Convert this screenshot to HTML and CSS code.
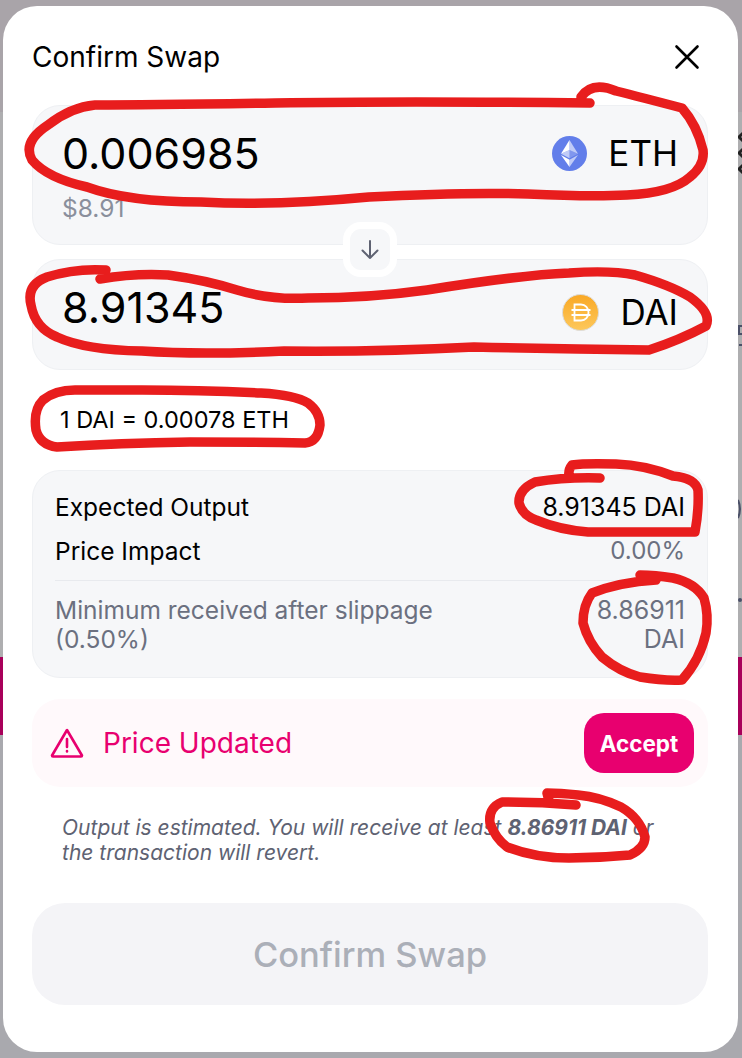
FILE: index.html
```html
<!DOCTYPE html>
<html lang="en">
<head>
    <meta charset="UTF-8" />
    <title>Confirm Swap</title>
    <link rel="stylesheet" href="styles.css">
</head>
<body>
    <!-- Bits of the page behind the modal -->
    <svg class="backdrop-bits" viewBox="0 0 742 1058" width="742" height="1058">
        <path d="M746 130l-7 7 7 7M746 146l-7 7 7 7M746 162l-7 7 7 7" fill="none" stroke="#222" stroke-width="3"/>
        <path d="M743 326h-4v8h3M739 345h3" fill="none" stroke="#4b5068" stroke-width="2"/>
        <path d="M738 500q4 9 0 18" fill="none" stroke="#4b5068" stroke-width="2"/>
        <circle cx="740" cy="600" r="2" fill="#4b5068"/>
    </svg>

    <div class="modal">
        <div class="modal-header">
            <h2>Confirm Swap</h2>
            <svg class="close-icon" viewBox="0 0 26 26" width="26" height="26">
                <path d="M2.500 2.500l21 21M23.500 2.500l-21 21" fill="none" stroke="#000" stroke-width="2.600" stroke-linecap="round"/>
            </svg>
        </div>

        <div class="swap-cards">
            <div class="card token-card from-card">
                <div class="token-row">
                    <span class="amount">0.006985</span>
                    <div class="token">
                        <svg class="token-icon" viewBox="0 0 35 35" width="35" height="35">
                            <circle cx="17.500" cy="17.500" r="17.500" fill="#627eea"/>
                            <path d="M17.500 4v10l8.500 3.800z" fill="#fff" fill-opacity=".6"/>
                            <path d="M17.500 4L9 17.800l8.500-3.800z" fill="#fff"/>
                            <path d="M17.500 23.800V31l8.500-12z" fill="#fff" fill-opacity=".6"/>
                            <path d="M17.500 31v-7.200L9 19z" fill="#fff"/>
                            <path d="M17.500 22.200l8.500-4.400-8.500-3.800z" fill="#fff" fill-opacity=".2"/>
                            <path d="M9 17.800l8.500 4.400V14z" fill="#fff" fill-opacity=".6"/>
                        </svg>
                        <span>ETH</span>
                    </div>
                </div>
                <div class="fiat">$8.91</div>
            </div>
            <div class="arrow-box">
                <svg viewBox="0 0 24 24" width="24" height="24">
                    <path d="M12 3v17M4.500 12.500L12 20l7.500-7.500" fill="none" stroke="#5e6272" stroke-width="2" stroke-linecap="round" stroke-linejoin="round"/>
                </svg>
            </div>
            <div class="card token-card to-card">
                <div class="token-row">
                    <span class="amount">8.91345</span>
                    <div class="token token-lower">
                        <svg class="token-icon" viewBox="0 0 37 37" width="37" height="37">
                            <defs>
                                <linearGradient id="dai-fill" x1="0" y1="0" x2="0" y2="1">
                                    <stop offset="0" stop-color="#f9a824"/>
                                    <stop offset="1" stop-color="#fdc85c"/>
                                </linearGradient>
                            </defs>
                            <circle cx="18.500" cy="18.500" r="18" fill="url(#dai-fill)" stroke="#dcdcdc"/>
                            <path d="M12.500 10.500h6.500c4.500 0 7.500 3.500 7.500 8s-3 8-7.500 8h-6.500zM9.500 16h19M9.500 21h19" fill="none" stroke="#fff" stroke-width="1.800"/>
                        </svg>
                        <span>DAI</span>
                    </div>
                </div>
            </div>
        </div>

        <div class="rate">1 DAI = 0.00078 ETH</div>

        <div class="card info-card">
            <div class="info-row">
                <span>Expected Output</span>
                <span class="info-value">8.91345 DAI</span>
            </div>
            <div class="info-row">
                <span>Price Impact</span>
                <span class="info-impact muted">0.00%</span>
            </div>
            <div class="info-divider"></div>
            <div class="info-row info-row-min muted">
                <span>Minimum received after slippage (0.50%)</span>
                <span class="info-value min-value">8.86911 DAI</span>
            </div>
        </div>

        <div class="price-warning">
            <div class="price-warning-label">
                <svg viewBox="0 0 34 30" width="34" height="30">
                    <path d="M17 2L2 27.500a1 1 0 0 0 1 1h28a1 1 0 0 0 1-1z" fill="none" stroke="#e8006f" stroke-width="2.600" stroke-linejoin="round"/>
                    <path d="M17 11v8M17 23v.500" fill="none" stroke="#e8006f" stroke-width="2.600" stroke-linecap="round"/>
                </svg>
                <span>Price Updated</span>
            </div>
            <button class="accept-btn">Accept</button>
        </div>

        <p class="note">Output is estimated. You will receive at least <b>8.86911 DAI</b> or the transaction will revert.</p>

        <button class="confirm-btn" disabled>Confirm Swap</button>
    </div>

    <!-- Red marker scribbled on the screenshot -->
    <svg class="scribbles" viewBox="0 0 742 1058" width="742" height="1058">
        <g fill="none" stroke="#e81d1d" stroke-width="9.500" stroke-linecap="round" stroke-linejoin="round">
            <path d="M590 103Q400 101 275 103Q150 105 95 105Q71 107 48 125Q22 142 32 160Q47 178 87 187Q128 202 201 202Q275 206 369 197Q464 192 528 194Q592 197 627 195Q672 193 690 177Q705 165 703 150Q697 125 682 108Q640 97 616 91Q592 81 581 97"/>
            <path d="M100 279Q135 273 168 275Q205 280 237 290Q270 300 308 298Q370 298 427 290Q520 275 569 273Q610 270 635 275Q670 285 690 297Q712 313 706 326Q680 340 649 350Q560 349 474 347Q380 352 284 351Q200 355 142 351Q85 350 57 337Q35 328 31 305Q26 285 47 277Q75 268 106 270"/>
            <path d="M57 447Q40 445 36 430Q33 410 43 400Q55 390 75 390Q105 390 142 390Q200 390 261 393Q295 395 308 403Q320 412 320 425Q318 442 305 443Q250 442 190 442Q120 443 57 447"/>
            <path d="M600 478Q565 477 535 482Q518 490 519 503Q522 515 536 520Q560 530 588 532Q640 532 695 532Q699 510 698 490Q695 478 673 476Q645 465 616 464Q585 463 572 465Q568 470 569 476"/>
            <path d="M656 580Q620 582 592 593Q583 605 583 623Q588 642 602 657Q620 672 640 677Q665 681 682 680Q700 660 706 633Q709 615 704 598Q695 583 673 578Q655 575 640 575"/>
            <path d="M576 805Q540 802 502 802Q488 808 490 823Q495 838 507 847Q535 858 569 858Q600 858 630 855Q645 848 645 837Q640 818 621 807Q600 797 578 795Q560 793 547 793Q548 798 550 803"/>
        </g>
    </svg>
</body>
</html>
```

FILE: styles.css
```css
:root {
    --card-color: #f6f7f9;
    --border-color: #eef0f3;
    --text-color: #000;
    --muted-color: #6b7080;
    --pink-color: #e8006f;
}

* {
    margin: 0;
    padding: 0;
    box-sizing: border-box;
}

body {
    position: relative;
    width: 742px;
    height: 1058px;
    overflow: hidden;
    font-family: Inter, "Noto Sans", sans-serif;
    color: var(--text-color);
    padding: 6px 3px;
    background: linear-gradient(180deg,
        #a9a4a9 0, #a9a4a9 112px,
        #aeaeb0 112px, #aeaeb0 657px,
        #a8005a 657px, #a8005a 735px,
        #a9a9ae 735px, #a9a9ae 100%);
}

.backdrop-bits, .scribbles {
    position: absolute;
    top: 0;
    left: 0;
    pointer-events: none;
}

.modal {
    position: relative;
    display: flex;
    flex-direction: column;
    width: 735px;
    height: 1046px;
    padding: 0 30px 0 29px;
    background-color: #fff;
    border-radius: 34px;
}

.modal-header {
    display: flex;
    justify-content: space-between;
    align-items: center;
    height: 99px;
    padding-top: 2px;
    padding-right: 8px;
}

.modal-header h2 {
    font-size: 28px;
    font-weight: 400;
    line-height: 34px;
}

.card {
    background-color: var(--card-color);
    border: 1px solid var(--border-color);
    border-radius: 28px;
}

.swap-cards {
    position: relative;
    display: flex;
    flex-direction: column;
    gap: 14px;
}

.token-card {
    padding: 23px 29px 0 29px;
}

.from-card {
    height: 140px;
}

.to-card {
    height: 111px;
}

.token-row {
    display: flex;
    justify-content: space-between;
    align-items: flex-start;
}

.amount {
    font-size: 43px;
    line-height: 48px;
}

.token {
    display: flex;
    align-items: center;
    gap: 21px;
    height: 48px;
    font-size: 35px;
}

.token-lower {
    margin-top: 5px;
}

.fiat {
    margin-top: 16px;
    font-size: 24.500px;
    line-height: 30px;
    color: #8a8f9c;
}

.arrow-box {
    position: absolute;
    top: 117px;
    left: 311px;
    display: flex;
    justify-content: center;
    align-items: center;
    width: 54px;
    height: 55px;
    background-color: var(--card-color);
    border: 7px solid #fff;
    border-radius: 18px;
}

.rate {
    margin: 35px 0 35px 28px;
    font-size: 23.500px;
    line-height: 30px;
}

.info-card {
    padding: 21px 22px 23px 22px;
    font-size: 24.500px;
    line-height: 30px;
}

.info-row {
    display: flex;
    justify-content: space-between;
    margin-bottom: 14px;
}

.info-value {
    font-size: 25px;
}

.info-impact {
    font-size: 24px;
}

.info-row-min {
    margin-bottom: 0;
    line-height: 29px;
}

.muted {
    color: var(--muted-color);
}

.info-divider {
    height: 1px;
    margin-bottom: 15px;
    background-color: #e8eaee;
}

.info-row-min span:first-child {
    width: 420px;
}

.min-value {
    width: 110px;
    text-align: right;
}

.price-warning {
    display: flex;
    justify-content: space-between;
    align-items: center;
    height: 88px;
    margin-top: 21px;
    padding: 0 14px 0 18px;
    background-color: #fff9fb;
    border-radius: 28px;
}

.price-warning-label {
    display: flex;
    align-items: center;
    gap: 19px;
    font-size: 28px;
    font-weight: 400;
    color: var(--pink-color);
}

.accept-btn {
    width: 110px;
    height: 60px;
    font-family: inherit;
    font-size: 22.500px;
    font-weight: 700;
    color: #fff;
    background-color: var(--pink-color);
    border: none;
    border-radius: 20px;
}

.note {
    margin-top: 28px;
    padding: 0 50px 0 30px;
    font-size: 21px;
    line-height: 25px;
    font-style: italic;
    color: #5e6272;
}

.confirm-btn {
    width: 676px;
    height: 102px;
    margin-top: 38px;
    font-family: inherit;
    font-size: 34.500px;
    font-weight: 500;
    color: #abafb8;
    background-color: #f4f4f7;
    border: none;
    border-radius: 33px;
}
```
